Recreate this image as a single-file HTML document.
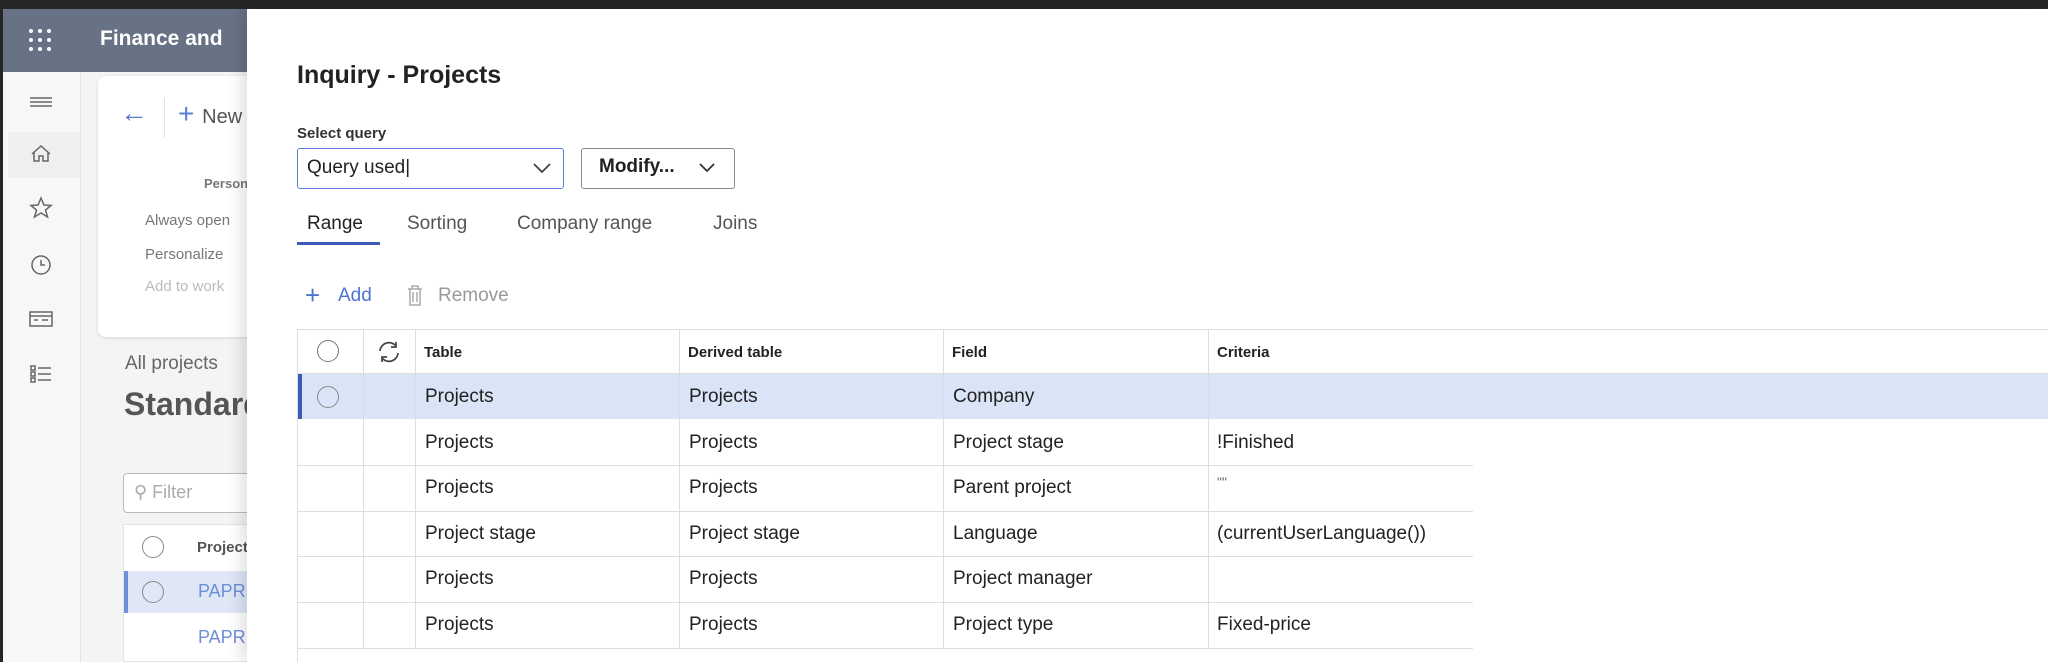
<!DOCTYPE html>
<html><head><meta charset="utf-8"><style>
*{margin:0;padding:0;box-sizing:border-box}
body{width:2048px;height:662px;overflow:hidden;background:#f4f4f4;font-family:"Liberation Sans",sans-serif;position:relative;color:#222}
.abs{position:absolute}
.t{position:absolute;white-space:nowrap}
</style></head><body>
<div class="abs" style="left:0;top:0;width:2048px;height:9px;background:#262626"></div>
<div class="abs" style="left:0;top:0;width:3px;height:662px;background:#262626"></div>
<!-- header -->
<div class="abs" style="left:3px;top:9px;width:260px;height:63px;background:#687285"></div>
<svg class="abs" style="left:28px;top:28px" width="24" height="24"><g fill="#fff"><circle cx="3" cy="3" r="2"/><circle cx="12" cy="3" r="2"/><circle cx="21" cy="3" r="2"/><circle cx="3" cy="12" r="2"/><circle cx="12" cy="12" r="2"/><circle cx="21" cy="12" r="2"/><circle cx="3" cy="21" r="2"/><circle cx="12" cy="21" r="2"/><circle cx="21" cy="21" r="2"/></g></svg>
<div class="t" style="left:100px;top:27px;font-size:21px;font-weight:bold;color:#fff">Finance and</div>
<!-- nav -->
<div class="abs" style="left:3px;top:72px;width:78px;height:590px;background:#f7f7f7;border-right:1px solid #e4e4e4"></div>
<div class="abs" style="left:8px;top:132px;width:72px;height:46px;background:#efefef"></div>
<svg class="abs" style="left:28px;top:92px" width="26" height="300" fill="none" stroke="#666" stroke-width="1.5">
<path d="M2 6h22M2 10h22M2 14h22"/>
<path d="M4 62l9-8 9 8M6 60v9h5v-5h4v5h5v-9"/>
<path d="M13 106l3 7 7 .5-5.5 4.5 2 7-6.5-4-6.5 4 2-7L3 113.5l7-.5z"/>
<circle cx="13" cy="173" r="9"/><path d="M13 168v5h4"/>
<rect x="2" y="220" width="22" height="14"/><path d="M2 224h22M6 228h4M14 228h6"/>
<path d="M3 274h4v4H3zM3 280h4v4H3zM3 286h4v4H3zM10 276h13M10 282h13M10 288h13"/>
</svg>
<!-- card -->
<div class="abs" style="left:98px;top:76px;width:200px;height:261px;background:#fff;border-radius:8px;box-shadow:0 1px 3px rgba(0,0,0,.12)"></div>
<div class="t" style="left:120px;top:97px;font-size:28px;color:#5a7fd0">←</div>
<div class="abs" style="left:164px;top:98px;width:1px;height:40px;background:#e2e2e2"></div>
<div class="t" style="left:178px;top:98px;font-size:28px;color:#5a7fd0">+ <span style="font-size:20px;color:#555">New</span></div>
<div class="t" style="left:204px;top:176px;font-size:13px;font-weight:bold;color:#777">Personalize</div>
<div class="t" style="left:145px;top:212px;font-size:15px;color:#777">Always open</div>
<div class="t" style="left:145px;top:246px;font-size:15px;color:#777">Personalize</div>
<div class="t" style="left:145px;top:278px;font-size:15px;color:#bbb">Add to work</div>
<div class="t" style="left:125px;top:353px;font-size:19px;color:#666">All projects</div>
<div class="t" style="left:124px;top:386px;font-size:32px;font-weight:bold;color:#555">Standard</div>
<div class="abs" style="left:123px;top:473px;width:160px;height:40px;border:1px solid #bbb;border-radius:4px;background:#fff"></div>
<div class="t" style="left:134px;top:482px;font-size:18px;color:#aaa">⚲ Filter</div>
<div class="abs" style="left:123px;top:524px;width:160px;height:138px;background:#fff;border:1px solid #e4e4e4"></div>
<div class="abs" style="left:142px;top:536px;width:22px;height:22px;border:1.5px solid #888;border-radius:50%"></div>
<div class="t" style="left:197px;top:539px;font-size:15px;font-weight:bold;color:#555">Project</div>
<div class="abs" style="left:124px;top:571px;width:160px;height:42px;background:#dfe7f6;border-left:4px solid #6d8fd8"></div>
<div class="abs" style="left:142px;top:581px;width:22px;height:22px;border:1.5px solid #888;border-radius:50%"></div>
<div class="t" style="left:198px;top:581px;font-size:18px;color:#6d8fd8">PAPR</div>
<div class="t" style="left:198px;top:627px;font-size:18px;color:#6d8fd8">PAPR</div>
<!-- dialog -->
<div class="abs" style="left:247px;top:9px;width:1801px;height:653px;background:#fff;box-shadow:-6px 0 14px rgba(0,0,0,.12)"></div>
<div class="t" style="left:297px;top:61px;font-size:25px;font-weight:bold;color:#222">Inquiry - Projects</div>
<div class="t" style="left:297px;top:125px;font-size:15px;font-weight:bold;color:#333">Select query</div>
<div class="abs" style="left:297px;top:148px;width:267px;height:41px;border:1.5px solid #5b7fd6;border-radius:3px"></div>
<div class="t" style="left:307px;top:157px;font-size:19px;color:#222">Query used|</div>
<svg class="abs" style="left:532px;top:161px" width="20" height="14"><path d="M2 3l8 8 8-8" stroke="#444" stroke-width="1.8" fill="none"/></svg>
<div class="abs" style="left:581px;top:148px;width:154px;height:41px;border:1.5px solid #8a8a8a;border-radius:3px"></div>
<div class="t" style="left:599px;top:156px;font-size:19px;font-weight:bold;color:#222">Modify...</div>
<svg class="abs" style="left:697px;top:161px" width="20" height="14"><path d="M3 3l7 7 7-7" stroke="#333" stroke-width="1.8" fill="none"/></svg>
<div class="t" style="left:307px;top:213px;font-size:19px;color:#222">Range</div>
<div class="t" style="left:407px;top:213px;font-size:19px;color:#555">Sorting</div>
<div class="t" style="left:517px;top:213px;font-size:19px;color:#555">Company range</div>
<div class="t" style="left:713px;top:213px;font-size:19px;color:#555">Joins</div>
<div class="abs" style="left:297px;top:242px;width:83px;height:3px;background:#3b5db8"></div>
<div class="t" style="left:305px;top:280px;font-size:26px;color:#4d74cf;line-height:30px">+</div>
<div class="t" style="left:338px;top:285px;font-size:19px;color:#4d74cf">Add</div>
<svg class="abs" style="left:407px;top:285px" width="16" height="22" fill="none" stroke="#aaa" stroke-width="1.5"><path d="M1 4h14M5 4V1h6v3M3 4v16h10V4M6 7v10M10 7v10"/></svg>
<div class="t" style="left:438px;top:285px;font-size:19px;color:#999">Remove</div>
<!-- table -->
<div class="abs" style="left:297px;top:329px;width:1751px;height:45px;border-top:1px solid #ddd;border-bottom:1px solid #ddd"></div>
<div class="abs" style="left:297px;top:374px;width:1751px;height:45px;background:#d9e4f6"></div>
<div class="abs" style="left:297px;top:374px;width:5px;height:45px;background:#3b5db8"></div>
<div class="abs" style="left:297px;top:329px;width:1px;height:333px;background:#ddd"></div>
<div class="abs" style="left:363px;top:329px;width:1px;height:320px;background:#ddd"></div>
<div class="abs" style="left:415px;top:329px;width:1px;height:320px;background:#ddd"></div>
<div class="abs" style="left:679px;top:329px;width:1px;height:320px;background:#ddd"></div>
<div class="abs" style="left:943px;top:329px;width:1px;height:320px;background:#ddd"></div>
<div class="abs" style="left:1208px;top:329px;width:1px;height:320px;background:#ddd"></div>
<div class="abs" style="left:297px;top:465px;width:1176px;height:1px;background:#ddd"></div>
<div class="abs" style="left:297px;top:511px;width:1176px;height:1px;background:#ddd"></div>
<div class="abs" style="left:297px;top:556px;width:1176px;height:1px;background:#ddd"></div>
<div class="abs" style="left:297px;top:602px;width:1176px;height:1px;background:#ddd"></div>
<div class="abs" style="left:297px;top:648px;width:1176px;height:1px;background:#ddd"></div>
<div class="abs" style="left:317px;top:340px;width:22px;height:22px;border:1.5px solid #777;border-radius:50%"></div>
<svg class="abs" style="left:376px;top:340px" width="26" height="24" fill="none" stroke="#444" stroke-width="1.7"><path d="M4 11a9 9 0 0 1 16-5M20 2v5h-5M22 13a9 9 0 0 1-16 5M6 22v-5h5"/></svg>
<div class="abs" style="left:317px;top:386px;width:22px;height:22px;border:1.5px solid #888;border-radius:50%"></div>
<div style="font-size:15px;font-weight:bold;color:#222">
<div class="t" style="left:424px;top:344px">Table</div>
<div class="t" style="left:688px;top:344px">Derived table</div>
<div class="t" style="left:952px;top:344px">Field</div>
<div class="t" style="left:1217px;top:344px">Criteria</div>
</div>
<div style="font-size:19px;color:#222">
<div class="t" style="left:425px;top:386px">Projects</div><div class="t" style="left:689px;top:386px">Projects</div><div class="t" style="left:953px;top:386px">Company</div>
<div class="t" style="left:425px;top:432px">Projects</div><div class="t" style="left:689px;top:432px">Projects</div><div class="t" style="left:953px;top:432px">Project stage</div><div class="t" style="left:1217px;top:432px">!Finished</div>
<div class="t" style="left:425px;top:477px">Projects</div><div class="t" style="left:689px;top:477px">Projects</div><div class="t" style="left:953px;top:477px">Parent project</div><div class="t" style="left:1217px;top:474px;font-size:14px;color:#666">""</div>
<div class="t" style="left:425px;top:523px">Project stage</div><div class="t" style="left:689px;top:523px">Project stage</div><div class="t" style="left:953px;top:523px">Language</div><div class="t" style="left:1217px;top:523px">(currentUserLanguage())</div>
<div class="t" style="left:425px;top:568px">Projects</div><div class="t" style="left:689px;top:568px">Projects</div><div class="t" style="left:953px;top:568px">Project manager</div>
<div class="t" style="left:425px;top:614px">Projects</div><div class="t" style="left:689px;top:614px">Projects</div><div class="t" style="left:953px;top:614px">Project type</div><div class="t" style="left:1217px;top:614px">Fixed-price</div>
</div>
</body></html>
